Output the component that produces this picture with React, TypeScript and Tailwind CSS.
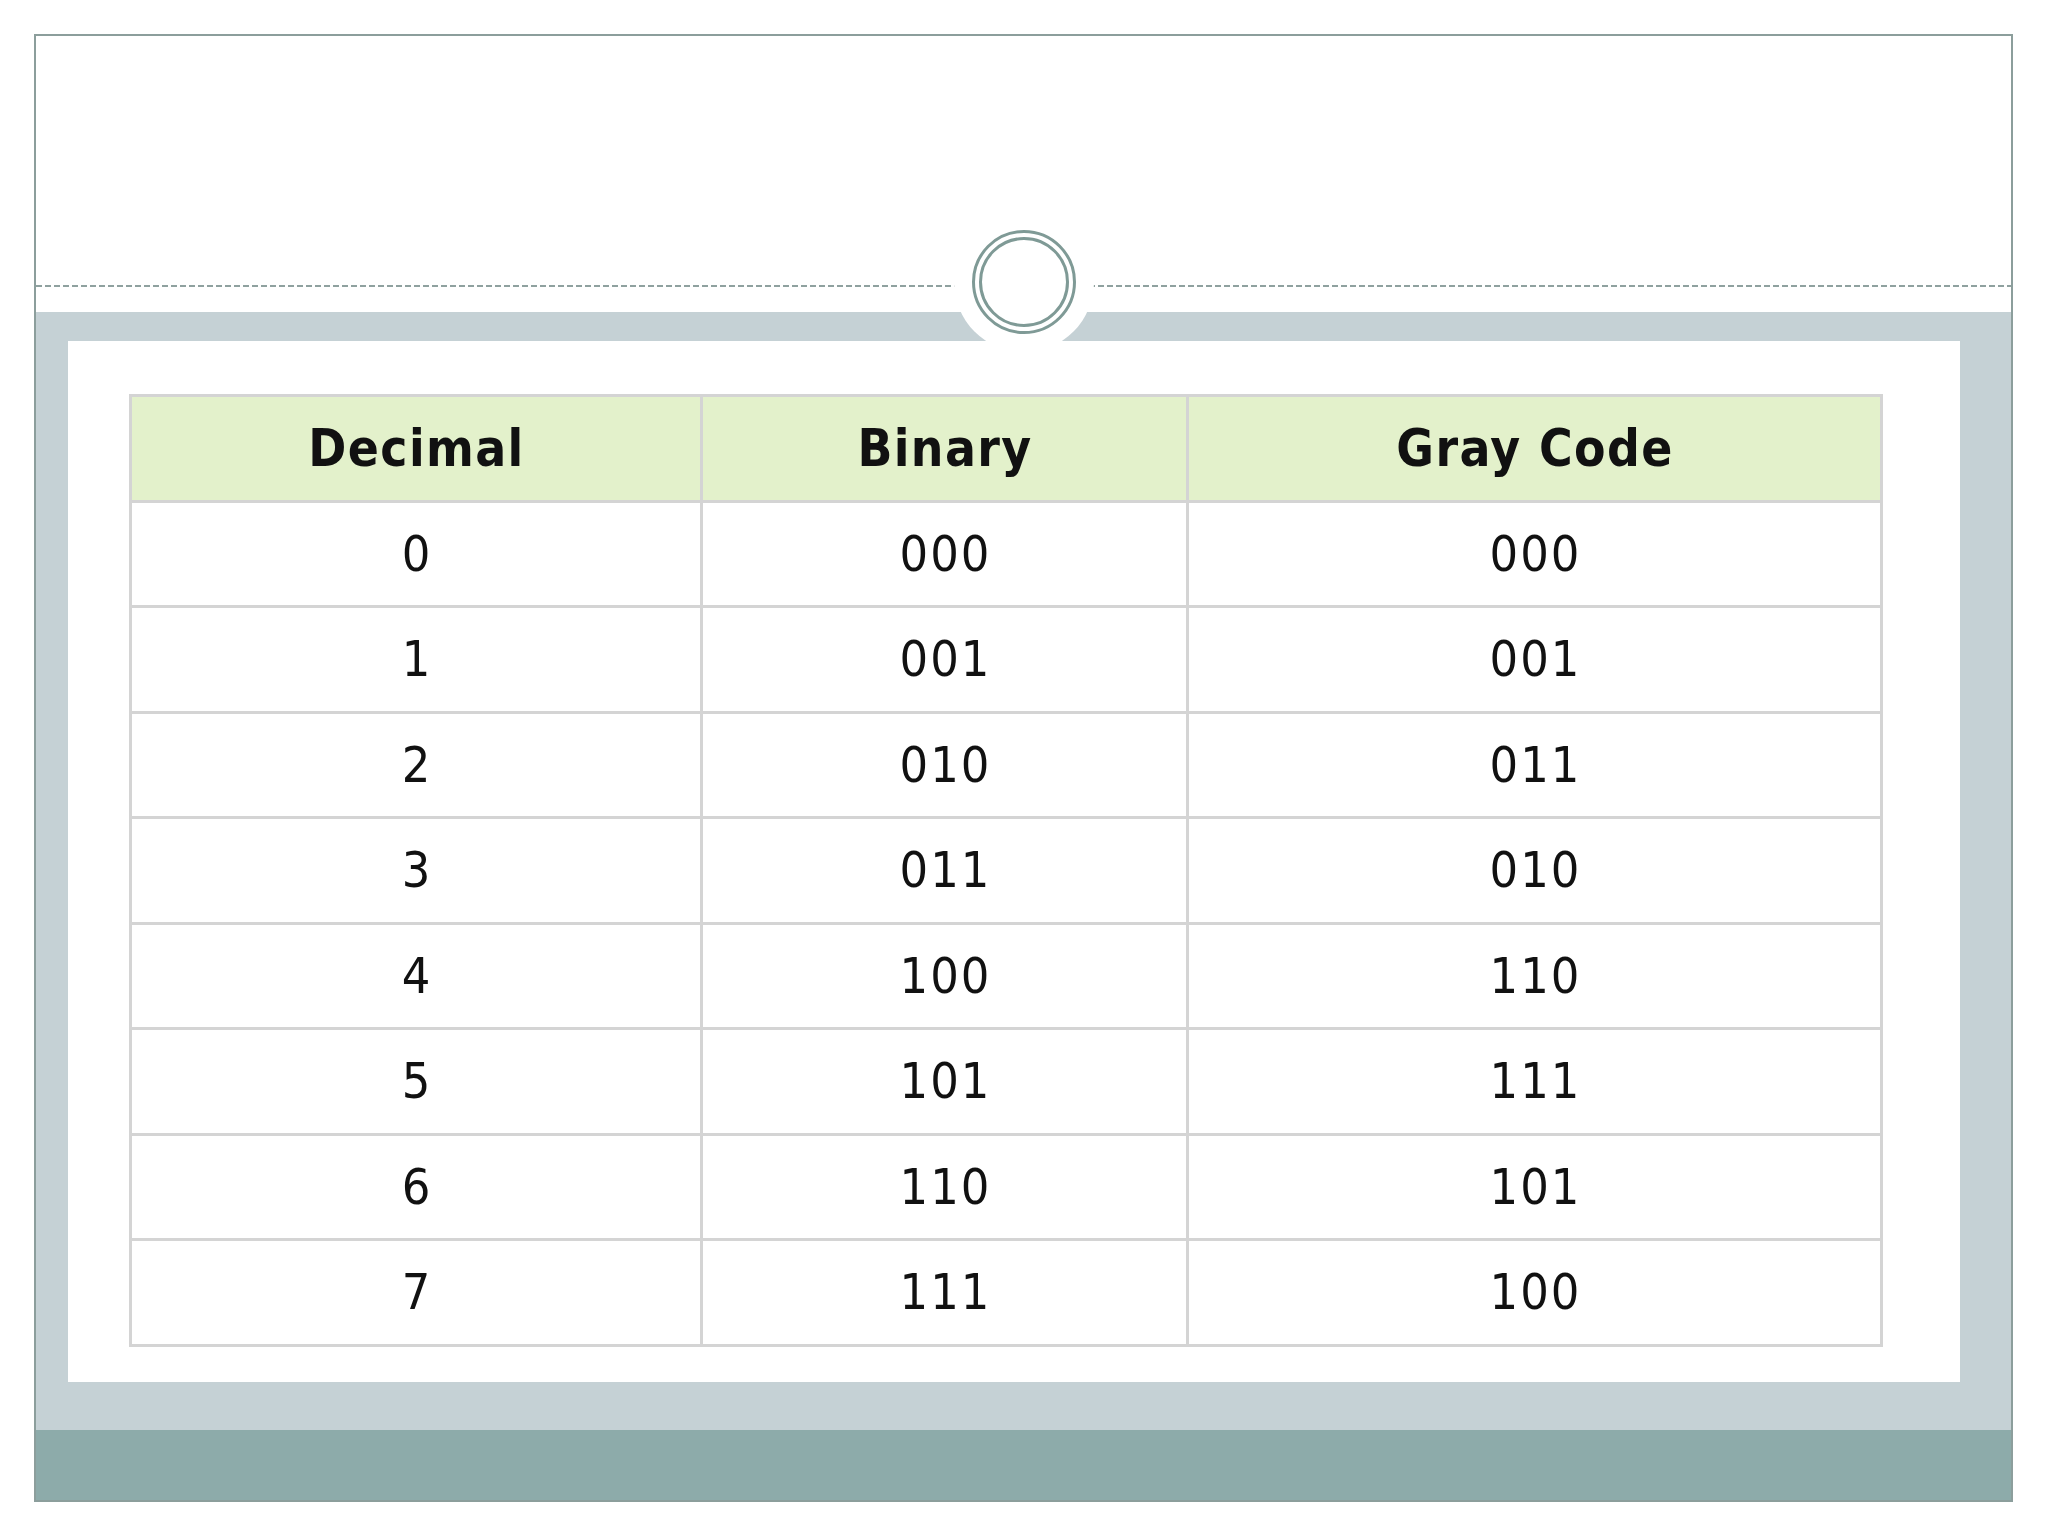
import React from "react";

const rows: [string, string, string][] = [
  ["0", "000", "000"],
  ["1", "001", "001"],
  ["2", "010", "011"],
  ["3", "011", "010"],
  ["4", "100", "110"],
  ["5", "101", "111"],
  ["6", "110", "101"],
  ["7", "111", "100"],
];

export default function App() {
  return (
    <div
      className="w-[2048px] h-[1536px] bg-white pt-[34px] pl-[34px]"
      style={{ fontFamily: '"DejaVu Sans Condensed", "DejaVu Sans", Tahoma, sans-serif' }}
    >
      <div className="relative w-[1979px] border-2 border-[#8c9e9c] flex flex-col">
        {/* top white area with dashed line */}
        <div className="h-[276px] flex flex-col justify-end pb-[25px]">
          <div className="h-[2px] w-full bg-[repeating-linear-gradient(90deg,#8fa19f_0px,#8fa19f_6px,transparent_6px,transparent_9px)]" />
        </div>

        {/* gray band */}
        <div className="h-[1118px] bg-[#c5d1d5] pt-[29px] pl-[32px] pr-[51px] pb-[48px]">
          <div className="h-full bg-white pl-[61px] pt-[53px]">
            <table className="border-collapse text-[#111]">
              <colgroup>
                <col className="w-[571px]" />
                <col className="w-[486px]" />
                <col className="w-[694px]" />
              </colgroup>
              <thead>
                <tr className="h-[105.5px] bg-[#e3f1cb]">
                  {["Decimal", "Binary", "Gray Code"].map((h) => (
                    <th
                      key={h}
                      className="border-[3px] border-[#d4d4d4] text-center text-[51px] font-bold leading-none tracking-[1.4px] p-0 pl-[1px]"
                    >
                      {h}
                    </th>
                  ))}
                </tr>
              </thead>
              <tbody>
                {rows.map((r) => (
                  <tr key={r[0]} className="h-[105.5px]">
                    {r.map((c, i) => (
                      <td
                        key={i}
                        className="border-[3px] border-[#d4d4d4] text-center text-[50px] leading-none tracking-[2px] p-0 pl-[2px]"
                      >
                        {c}
                      </td>
                    ))}
                  </tr>
                ))}
              </tbody>
            </table>
          </div>
        </div>

        {/* teal bottom band */}
        <div className="h-[70px] bg-[#8dabaa]" />

        {/* circle ornament */}
        <div className="absolute left-1/2 top-[176px] -translate-x-1/2 w-[140px] h-[140px] rounded-full bg-white flex items-center justify-center">
          <div className="w-[104px] h-[104px] rounded-full border-[3px] border-[#7f9a96] flex items-center justify-center">
            <div className="w-[90px] h-[90px] rounded-full border-[3px] border-[#7f9a96]" />
          </div>
        </div>
      </div>
    </div>
  );
}
